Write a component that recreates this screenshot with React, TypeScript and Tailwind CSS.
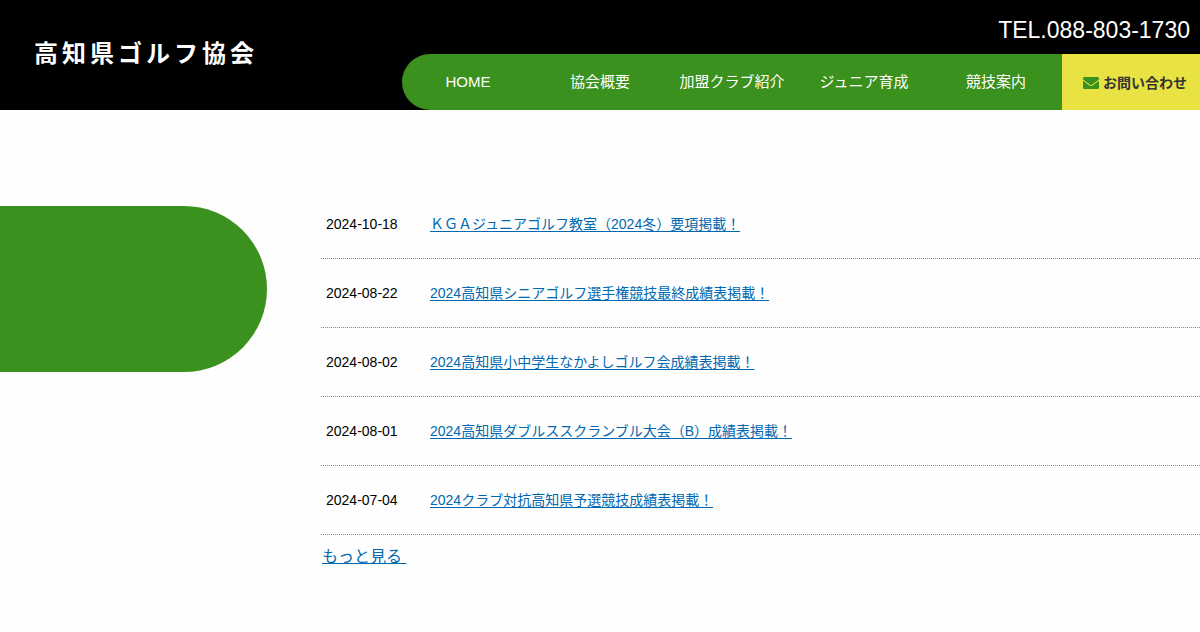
import { FC } from "react";
import { FaEnvelope } from "react-icons/fa";

interface INews {
    date: string;
    title: string;
}

const menu: string[] = ["HOME", "協会概要", "加盟クラブ紹介", "ジュニア育成", "競技案内"];

const news: INews[] = [
    { date: "2024-10-18", title: "ＫＧＡジュニアゴルフ教室（2024冬）要項掲載！" },
    { date: "2024-08-22", title: "2024高知県シニアゴルフ選手権競技最終成績表掲載！" },
    { date: "2024-08-02", title: "2024高知県小中学生なかよしゴルフ会成績表掲載！" },
    { date: "2024-08-01", title: "2024高知県ダブルススクランブル大会（B）成績表掲載！" },
    { date: "2024-07-04", title: "2024クラブ対抗高知県予選競技成績表掲載！" },
];

const Header: FC = () => {
    return (
        <header className="flex justify-between bg-black text-white">
            <h1 className="pt-[38px] pl-[34px] text-2xl font-bold tracking-[4px]">
                <a href="#">高知県ゴルフ協会</a>
            </h1>
            <div>
                <p className="h-[54px] pt-3 pr-2.5 text-right text-[23px] leading-9">TEL.088-803-1730</p>
                <div className="flex h-14">
                    <nav className="flex rounded-l-full bg-[#3b911e] text-[15px]">
                        {menu.map((item) => (
                            <a key={item} href="#" className="flex w-[132px] items-center justify-center">
                                {item}
                            </a>
                        ))}
                    </nav>
                    <a
                        href="#"
                        className="flex w-[138px] items-center justify-center gap-1 bg-[#e8e342] pt-0.5 pl-2 text-sm font-bold text-[#333]"
                    >
                        <FaEnvelope className="size-4 text-[#3b911e]" />
                        お問い合わせ
                    </a>
                </div>
            </div>
        </header>
    );
};

const NewsRow: FC<INews> = ({ date, title }) => {
    return (
        <li className="flex h-[69px] items-center border-b border-dotted border-[#888] pl-[5px] text-sm">
            <time dateTime={date} className="w-[104px]">
                {date}
            </time>
            <a href="#" className="text-[#0068b0] underline underline-offset-2">
                {title}
            </a>
        </li>
    );
};

const App: FC = () => {
    return (
        <div className="min-h-screen bg-[#fefefe] font-['Liberation_Sans','Noto_Sans_CJK_JP',sans-serif] text-black">
            <Header />
            <main className="flex gap-[54px] pt-20">
                <div className="mt-4 h-[166px] w-[267px] shrink-0 rounded-r-full bg-[#3b911e]" />
                <section className="grow">
                    <ul>
                        {news.map((item) => (
                            <NewsRow key={item.date} {...item} />
                        ))}
                    </ul>
                    <a
                        href="#"
                        className="mt-2.5 ml-px inline-block whitespace-pre text-[#0068b0] underline underline-offset-1"
                    >
                        {"もっと見る "}
                    </a>
                </section>
            </main>
        </div>
    );
};

export default App;
